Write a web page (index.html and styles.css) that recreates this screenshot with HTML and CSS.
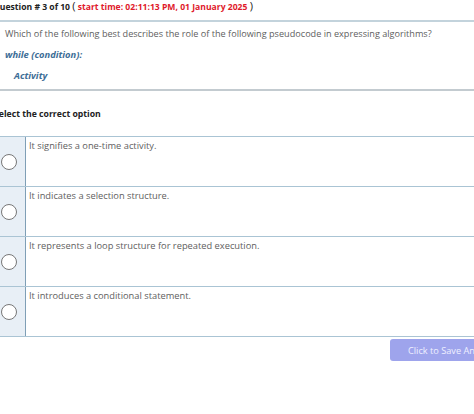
FILE: index.html
```html
<!DOCTYPE html>
<html>
<head>
<meta charset="utf-8">
<link rel="stylesheet" href="styles.css">
</head>
<body>
<div class="page">
  <div class="header"><span class="qno">Question # 3 of 10</span> <span class="paren">(</span> <span class="time">start time: 02:11:13 PM, 01 January 2025</span> <span class="paren">)</span></div>
  <div class="question">
    <p class="qtext">Which of the following best describes the role of the following pseudocode in expressing algorithms?</p>
    <p class="code">while (condition):</p>
    <p class="code indent">Activity</p>
  </div>
  <div class="select">Select the correct option</div>
  <div class="options">
    <div class="opt"><div class="radio-cell"><span class="radio"></span></div><div class="opt-text">It signifies a one-time activity.</div></div>
    <div class="opt"><div class="radio-cell"><span class="radio"></span></div><div class="opt-text">It indicates a selection structure.</div></div>
    <div class="opt"><div class="radio-cell"><span class="radio"></span></div><div class="opt-text">It represents a loop structure for repeated execution.</div></div>
    <div class="opt"><div class="radio-cell"><span class="radio"></span></div><div class="opt-text">It introduces a conditional statement.</div></div>
  </div>
  <div class="actions"><button class="save">Click to Save Answer &amp; Next</button></div>
</div>
</body>
</html>
```
FILE: styles.css
```css
html, body { margin: 0; padding: 0; background: #fff; overflow: hidden; }
body { font-family: "Open Sans", "Liberation Sans", sans-serif; width: 474px; height: 414px; }
.page { width: 474px; }
.header {
  margin-left: -7px;
  height: 20px;
  font-size: 8.6px;
  font-weight: 700;
  color: #222;
  white-space: nowrap;
  line-height: 12px;
}
.header .paren { font-weight: 400; font-size: 11px; }
.header .time { color: #e0192b; }
.question {
  border-top: 2px solid #c3d3dc;
  border-bottom: 2px solid #c3cbd0;
  height: 67px;
  padding-left: 5px;
}
.question p { margin: 0; }
.qtext { font-size: 9.15px; color: #606060; padding-top: 6px; line-height: 12px; }
.code { font-size: 9.4px; font-weight: 700; font-style: italic; color: #3d6d96; line-height: 12px; }
.qtext + .code { margin-top: 9px; }
.code.indent { margin-top: 9px; padding-left: 9px; }
.select {
  margin-left: -6px;
  padding-top: 17px;
  height: 28px;
  font-size: 8.7px;
  font-weight: 700;
  color: #222;
  line-height: 12px;
}
.options { border-top: 1px solid #aac4d4; }
.opt { display: flex; height: 49px; border-bottom: 1px solid #aac4d4; }
.radio-cell {
  width: 25px;
  background: #e8eff6;
  border-right: 1px solid #7f9fb6;
  display: flex;
  align-items: center;
}
.radio {
  display: block;
  width: 16px;
  height: 16px;
  border: 1px solid #777;
  border-radius: 50%;
  background: #fff;
  margin-left: 1px;
  box-sizing: border-box;
}
.opt-text { padding: 3px 0 0 3px; font-size: 9.3px; color: #606060; line-height: 12px; }
.actions { display: flex; justify-content: flex-start; padding: 2px 0 0 390px; }
.save {
  flex: none;
  height: 22px;
  width: 140px;
  border: none;
  border-radius: 3px;
  background: #9ea4ec;
  color: #eef0ff;
  font-family: inherit;
  font-size: 9.2px;
  text-align: left;
  padding: 0 0 0 18px;
  white-space: nowrap;
}
```
